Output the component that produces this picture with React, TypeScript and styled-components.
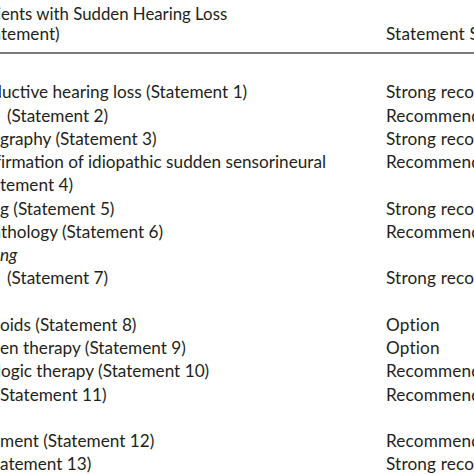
import React from 'react';
import styled, { createGlobalStyle } from 'styled-components';

const Global = createGlobalStyle`
  html, body { margin: 0; padding: 0; background: #fff; overflow: hidden; }
  #root { width: 474px; height: 474px; }
`;

const Page = styled.div`
  width: 474px;
  height: 474px;
  overflow: hidden;
  background: #fff;
  color: #231f20;
  font-family: Lato, "Open Sans", "Liberation Sans", sans-serif;
  font-size: 17.2px;
  padding-top: 3px;
  box-sizing: border-box;
`;

const Head = styled.div`
  display: grid;
  grid-template-columns: 386px 1fr;
  grid-template-rows: 20px 21px;
  line-height: 21px;
`;

const Rule = styled.div`
  height: 2px;
  background: #7a7a7a;
  margin-top: 8px;
`;

const Body = styled.div`
  display: grid;
  grid-template-columns: 386px 1fr;
  line-height: 23.25px;
  padding-top: 3px;
`;

const Cell = styled.div<{ $italic?: boolean; $small?: boolean }>`
  display: flex;
  white-space: pre;
  min-width: 0;
  font-style: ${(p) => (p.$italic ? 'italic' : 'normal')};
  font-size: ${(p) => (p.$small ? '16.8px' : 'inherit')};
`;

const Cut = styled.span<{ $lead: number; $clip?: boolean }>`
  flex: 0 0 ${(p) => p.$lead}px;
  width: ${(p) => p.$lead}px;
  min-width: 0;
  display: flex;
  justify-content: flex-end;
  overflow: ${(p) => (p.$clip ? 'hidden' : 'visible')};
`;

const CutText = styled.span`
  flex: none;
`;

const Strength = styled.div`
  white-space: nowrap;
  min-width: 0;
  letter-spacing: 0.15px;
`;

type Line = {
  prefix: string;
  text: string;
  lead: number;
  italic?: boolean;
  small?: boolean;
  clip?: boolean;
  strength?: string;
};

const header: Line[] = [
  { prefix: 'Table 1. Key Action Statements for Pati', text: 'ents with Sudden Hearing Loss', lead: 1, small: true },
  { prefix: 'Key Action Statement (Sta', text: 'tement)', lead: 1, strength: 'Statement Strength' },
];

const rows: Line[] = [
  { prefix: 'Diagnosis', text: '', lead: 0, italic: true },
  { prefix: 'Exclusion of cond', text: 'uctive hearing loss (Statement 1)', lead: 2, strength: 'Strong recommendation' },
  { prefix: 'Modifying factors\u2003', text: '(Statement 2)', lead: 7, clip: true, strength: 'Recommendation' },
  { prefix: 'Computed tomo', text: 'graphy (Statement 3)', lead: 0, strength: 'Strong recommendation against' },
  { prefix: 'Audiometric conf', text: 'irmation of idiopathic sudden sensorineural', lead: 1, strength: 'Recommendation' },
  { prefix: 'hearing loss (Sta', text: 'tement 4)', lead: 0 },
  { prefix: 'Laboratory testin', text: 'g (Statement 5)', lead: 0, strength: 'Strong recommendation against' },
  { prefix: 'Retrocochlear pa', text: 'thology (Statement 6)', lead: 1, strength: 'Recommendation' },
  { prefix: 'Education and counseli', text: 'ng', lead: 0, italic: true },
  { prefix: 'Patient education\u2003', text: '(Statement 7)', lead: 7, clip: true, strength: 'Strong recommendation' },
  { prefix: 'Treatment', text: '', lead: 0, italic: true },
  { prefix: 'Initial corticoster', text: 'oids (Statement 8)', lead: 0, strength: 'Option' },
  { prefix: 'Hyperbaric oxyg', text: 'en therapy (Statement 9)', lead: 0, strength: 'Option' },
  { prefix: 'Other pharmacol', text: 'ogic therapy (Statement 10)', lead: 1, strength: 'Recommendation against' },
  { prefix: 'Salvage therapy (', text: 'Statement 11)', lead: 0, strength: 'Recommendation' },
  { prefix: 'Follow-up', text: '', lead: 0, italic: true },
  { prefix: 'Outcomes assess', text: 'ment (Statement 12)', lead: 0, strength: 'Recommendation' },
  { prefix: 'Hearing rehabilitation (St', text: 'atement 13)', lead: 0, strength: 'Strong recommendation' },
];

const renderLine = (l: Line, i: number) => (
  <React.Fragment key={i}>
    <Cell $italic={l.italic} $small={l.small}>
      <Cut $lead={l.lead} $clip={l.clip}>
        <CutText>{l.prefix}</CutText>
      </Cut>
      {l.text}
    </Cell>
    <Strength>{l.strength ?? ''}</Strength>
  </React.Fragment>
);

export default function App() {
  return (
    <Page>
      <Global />
      <Head>{header.map(renderLine)}</Head>
      <Rule />
      <Body>{rows.map(renderLine)}</Body>
    </Page>
  );
}
